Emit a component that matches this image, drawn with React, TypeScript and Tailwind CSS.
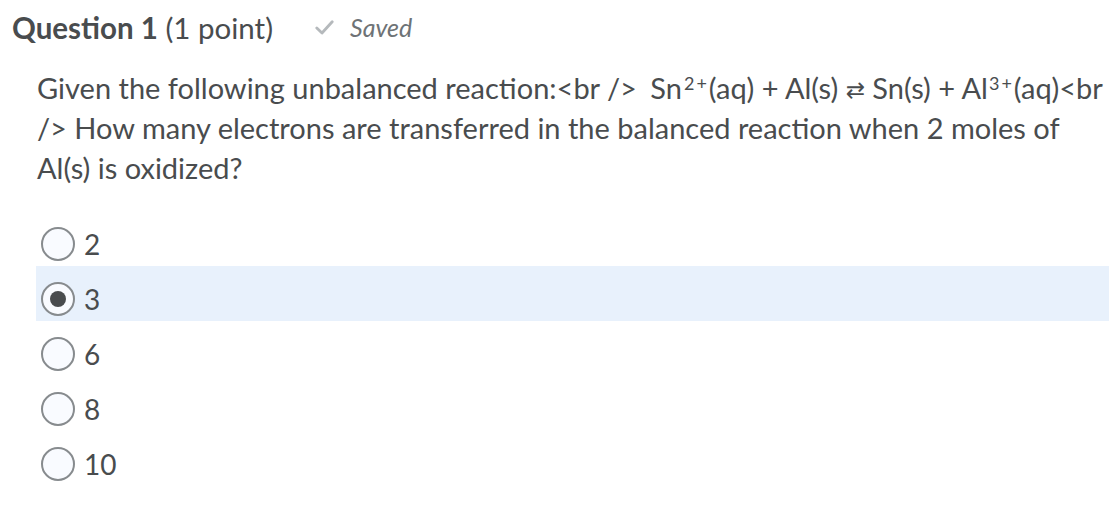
import { useState } from "react";

const options = ["2", "3", "6", "8", "10"];

export default function App() {
  const [selected, setSelected] = useState("3");

  return (
    <div className="min-h-screen bg-white font-['Lato','Liberation_Sans',sans-serif] text-[#494c4e]">
      {/* Header */}
      <div className="flex items-center pl-3 pt-[9px]">
        <h2 className="text-[29.5px] leading-[36px]">
          <span className="font-bold">Question 1</span>{" "}
          <span className="font-normal">(1 point)</span>
        </h2>
        <div className="ml-[42px] flex items-center gap-[16px] text-[#6e7376]">
          <svg width="19" height="15" viewBox="0 0 19 15" fill="none">
            <path
              d="M1.8 8 L7 13 L17.2 1.8"
              stroke="#b5b9bc"
              strokeWidth="2.8"
              strokeLinecap="round"
              strokeLinejoin="round"
            />
          </svg>
          <span className="text-[25px] italic">Saved</span>
        </div>
      </div>

      {/* Question text */}
      <p className="mt-[21px] pl-[37px] pr-[10px] text-[29px] leading-[40px]">
        Given the following unbalanced reaction:&lt;br /&gt;{" "}
        <span className="ml-[6px]">Sn</span>
        <sup className="ml-[2px] text-[18px] leading-none tracking-[2px]">2+</sup>(aq) + Al(s){" "}
        <span className="inline-block align-[1px] font-['DejaVu_Sans',sans-serif] text-[23px] leading-none">
          ⇄
        </span>{" "}
        Sn(s) + Al
        <sup className="ml-[1px] text-[18px] leading-none tracking-[2px]">3+</sup>(aq)&lt;br /&gt; How
        many electrons are transferred in the balanced reaction when 2 moles of Al(s) is oxidized?
      </p>

      {/* Options */}
      <div className="mt-[23px] pl-[36px] pr-[7px]">
        {options.map((opt) => {
          const isSel = opt === selected;
          return (
            <label
              key={opt}
              onClick={() => setSelected(opt)}
              className={`flex h-[55px] cursor-pointer items-start pt-[16px] ${
                isSel ? "bg-[#e8f1fc]" : ""
              }`}
            >
              <span className="ml-[5px] flex h-[34px] w-[34px] items-center justify-center rounded-full border-2 border-[#878b8e] bg-[#f9fbff]">
                {isSel && <span className="h-[16px] w-[16px] rounded-full bg-[#494c4e]" />}
              </span>
              <span className="ml-[9px] text-[28px] leading-[34px]">{opt}</span>
            </label>
          );
        })}
      </div>
    </div>
  );
}
